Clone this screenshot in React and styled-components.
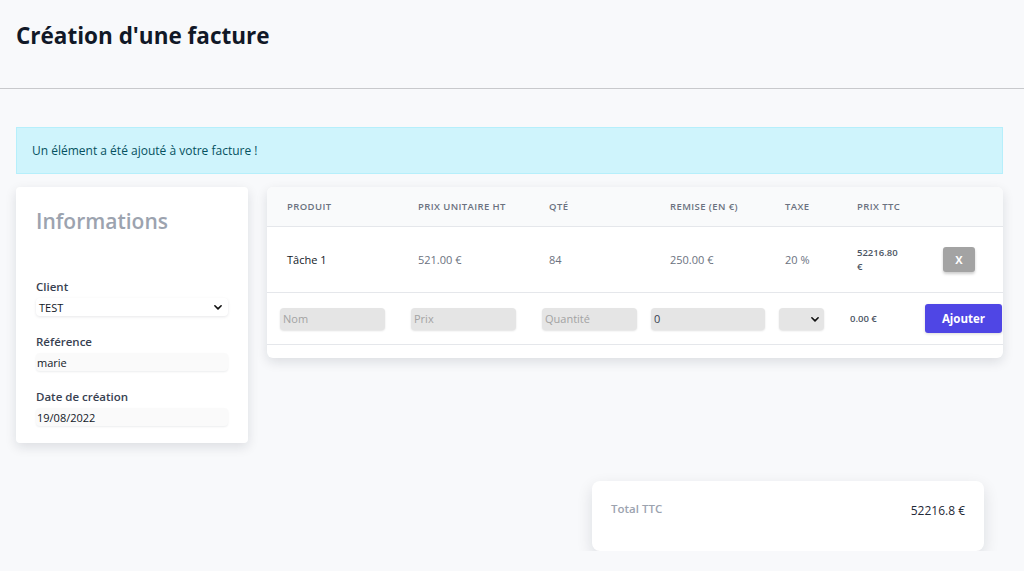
import React from "react";
import styled, { createGlobalStyle } from "styled-components";

const GlobalStyle = createGlobalStyle`
  * { box-sizing: border-box; }
  body {
    margin: 0;
    background: #f8f9fb;
    font-family: "Open Sans", "Noto Sans", sans-serif;
    color: #1f2937;
  }
`;

const columns = "131px 131px 121px 115px 72px 83px 1fr";

function App() {
  return (
    <>
      <GlobalStyle />
      <Header>
        <Title>Création d'une facture</Title>
      </Header>

      <Main>
        <Alert>Un élément a été ajouté à votre facture !</Alert>

        <Columns>
          <InfoCard>
            <InfoTitle>Informations</InfoTitle>
            <Field>
              <Label>Client</Label>
              <SelectBox>
                <span>TEST</span>
                <Chevron />
              </SelectBox>
            </Field>
            <Field>
              <Label>Référence</Label>
              <TextBox>marie</TextBox>
            </Field>
            <Field>
              <Label>Date de création</Label>
              <TextBox>19/08/2022</TextBox>
            </Field>
          </InfoCard>

          <TableCard>
            <HeadRow>
              <Th>Produit</Th>
              <Th>Prix unitaire HT</Th>
              <Th>Qté</Th>
              <Th>Remise (en €)</Th>
              <Th>Taxe</Th>
              <Th>Prix TTC</Th>
              <Th />
            </HeadRow>

            <BodyRow>
              <Td $dark>Tâche 1</Td>
              <Td>521.00 €</Td>
              <Td>84</Td>
              <Td>250.00 €</Td>
              <Td>20 %</Td>
              <TtcCell>
                52216.80
                <br />€
              </TtcCell>
              <Td $pad="23px">
                <DeleteButton>X</DeleteButton>
              </Td>
            </BodyRow>

            <InputRow>
              <InCell>
                <FakeInput $placeholder>Nom</FakeInput>
              </InCell>
              <InCell>
                <FakeInput $placeholder>Prix</FakeInput>
              </InCell>
              <InCell>
                <FakeInput $placeholder>Quantité</FakeInput>
              </InCell>
              <InCell $pad="1px" $padRight="0">
                <FakeInput>0</FakeInput>
              </InCell>
              <InCell $pad="14px" $padRight="13px">
                <FakeInput $select>
                  <Chevron />
                </FakeInput>
              </InCell>
              <InCell>
                <SmallTotal>0.00 €</SmallTotal>
              </InCell>
              <InCell $pad="5px" $padRight="1px">
                <AddButton>Ajouter</AddButton>
              </InCell>
            </InputRow>
          </TableCard>
        </Columns>

        <TotalRow>
          <TotalCard>
            <TotalLabel>Total TTC</TotalLabel>
            <TotalValue>52216.8 €</TotalValue>
          </TotalCard>
        </TotalRow>
      </Main>
    </>
  );
}

function Chevron() {
  return (
    <svg width="10" height="10" viewBox="0 0 16 16" fill="none">
      <path
        d="M3 6l5 5 5-5"
        stroke="#111"
        strokeWidth="2.6"
        strokeLinecap="round"
        strokeLinejoin="round"
      />
    </svg>
  );
}

export default App;

const Header = styled.header`
  height: 89px;
  padding: 19px 16px 0;
  border-bottom: 1px solid #c8c9cc;
`;

const Title = styled.h1`
  margin: 0;
  font-size: 22.5px;
  font-weight: 700;
  color: #111827;
  line-height: 34px;
`;

const Main = styled.main`
  padding: 38px 21px 0 16px;
`;

const Alert = styled.div`
  height: 47px;
  display: flex;
  align-items: center;
  padding: 0 15px;
  background: #cff4fc;
  border: 1px solid #b6effb;
  color: #055160;
  font-size: 12px;
  margin-bottom: 13px;
`;

const Columns = styled.div`
  display: flex;
  align-items: flex-start;
  gap: 19px;
`;

const InfoCard = styled.section`
  width: 232px;
  height: 256px;
  flex-shrink: 0;
  background: #fff;
  border-radius: 4px;
  box-shadow: 0 4px 12px rgba(15, 23, 42, 0.12);
  padding: 18px 20px 0;
`;

const InfoTitle = styled.h2`
  margin: 0 0 42px;
  font-size: 21px;
  font-weight: 600;
  color: #9ca3af;
  line-height: 32px;
`;

const Field = styled.div`
  margin-bottom: 18px;
`;

const Label = styled.div`
  font-size: 11.5px;
  font-weight: 600;
  color: #374151;
  line-height: 16px;
  margin-bottom: 3px;
`;

const SelectBox = styled.div`
  height: 18px;
  display: flex;
  align-items: center;
  justify-content: space-between;
  padding: 0 5px 0 3px;
  border-radius: 4px;
  box-shadow: 0 1px 3px rgba(15, 23, 42, 0.1);
  font-size: 11px;
  color: #111827;
`;

const TextBox = styled.div`
  height: 18px;
  display: flex;
  align-items: center;
  padding: 0 1px;
  border-radius: 4px;
  background: #fafafa;
  box-shadow: 0 1px 2px rgba(15, 23, 42, 0.08);
  font-size: 11px;
  color: #111827;
`;

const TableCard = styled.section`
  flex: 1;
  background: #fff;
  border-radius: 6px;
  box-shadow: 0 4px 12px rgba(15, 23, 42, 0.12);
  padding-bottom: 13px;
  overflow: hidden;
`;

const HeadRow = styled.div`
  display: grid;
  grid-template-columns: ${columns};
  height: 40px;
  align-items: center;
  background: #f9fafb;
  border-bottom: 1px solid #e5e7eb;
`;

const Th = styled.div`
  padding-left: 20px;
  font-size: 9.5px;
  font-weight: 600;
  letter-spacing: 0.4px;
  text-transform: uppercase;
  color: #6b7280;
`;

const BodyRow = styled.div`
  display: grid;
  grid-template-columns: ${columns};
  height: 66px;
  align-items: center;
  border-bottom: 1px solid #e5e7eb;
`;

const Td = styled.div`
  padding-left: ${(p) => p.$pad || "20px"};
  font-size: 11px;
  color: ${(p) => (p.$dark ? "#111827" : "#6b7280")};
`;

const TtcCell = styled.div`
  padding-left: 20px;
  font-size: 9.5px;
  font-weight: 600;
  line-height: 14px;
  color: #4b5563;
`;

const DeleteButton = styled.button`
  width: 32px;
  height: 25px;
  border: 0;
  border-radius: 3px;
  background: #a3a3a3;
  color: #fff;
  font-family: inherit;
  font-size: 11px;
  font-weight: 700;
  box-shadow: 0 2px 3px rgba(0, 0, 0, 0.2);
`;

const InputRow = styled.div`
  display: grid;
  grid-template-columns: ${columns};
  height: 52px;
  align-items: center;
  border-bottom: 1px solid #e5e7eb;
`;

const InCell = styled.div`
  padding-left: ${(p) => p.$pad || "13px"};
  padding-right: ${(p) => p.$padRight || "13px"};
`;

const FakeInput = styled.div`
  height: 22px;
  display: flex;
  align-items: center;
  justify-content: ${(p) => (p.$select ? "flex-end" : "flex-start")};
  padding: 0 ${(p) => (p.$select ? "4px" : "3px")};
  border-radius: 4px;
  background: #e5e5e5;
  box-shadow: 0 1px 2px rgba(0, 0, 0, 0.12);
  font-size: 11px;
  color: ${(p) => (p.$placeholder ? "#a3a3a3" : "#374151")};
`;

const SmallTotal = styled.div`
  font-size: 9.5px;
  font-weight: 600;
  color: #4b5563;
`;

const AddButton = styled.button`
  width: 77px;
  height: 29px;
  border: 0;
  border-radius: 3px;
  background: #4f46e5;
  color: #fff;
  font-family: inherit;
  font-size: 11.5px;
  font-weight: 700;
  box-shadow: 0 1px 3px rgba(0, 0, 0, 0.15);
`;

const TotalRow = styled.div`
  display: flex;
  justify-content: flex-end;
  padding-right: 19px;
  margin-top: 38px;
`;

const TotalCard = styled.section`
  width: 392px;
  height: 70px;
  display: flex;
  justify-content: space-between;
  align-items: flex-start;
  padding: 20px 19px 0;
  background: #fff;
  border-radius: 8px;
  box-shadow: 0 6px 16px rgba(15, 23, 42, 0.12);
`;

const TotalLabel = styled.div`
  font-size: 11.5px;
  font-weight: 600;
  color: #9ca3af;
`;

const TotalValue = styled.div`
  font-size: 12px;
  color: #1f2937;
  margin-top: 1px;
`;
